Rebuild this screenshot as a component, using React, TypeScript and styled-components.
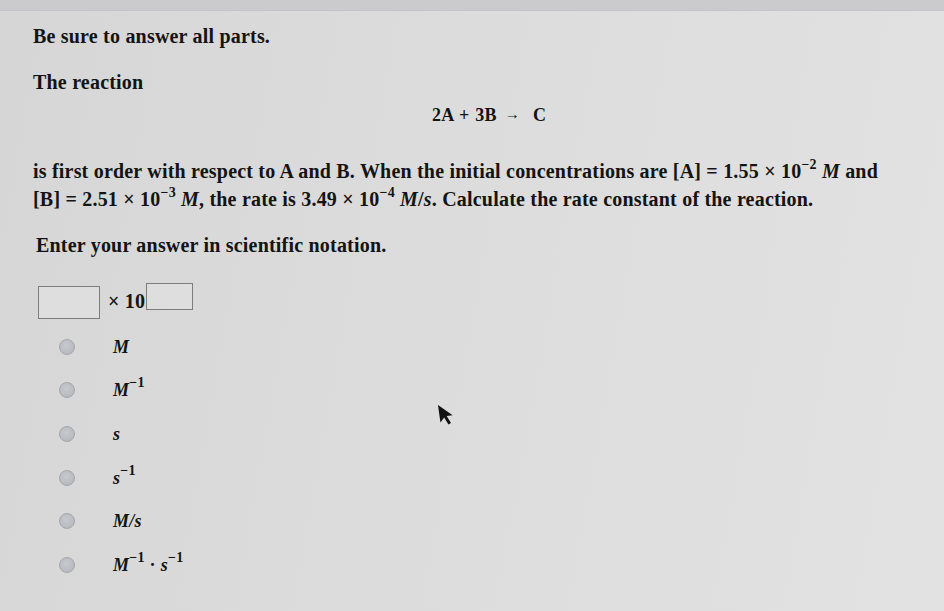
import { FC } from 'react';
import styled, { createGlobalStyle } from 'styled-components';

const GlobalStyle = createGlobalStyle`
  html, body {
    margin: 0;
    padding: 0;
    height: 100%;
  }
  body {
    background: #dcdcdc;
    font-family: 'Liberation Serif', 'Times New Roman', serif;
    color: #141414;
  }
`;

const units = [
  { id: 1, base: 'M', exp: '' },
  { id: 2, base: 'M', exp: '−1' },
  { id: 3, base: 's', exp: '' },
  { id: 4, base: 's', exp: '−1' },
  { id: 5, base: 'M/s', exp: '' },
  { id: 6, base: 'M', exp: '−1', second: 's' },
];

const Root = styled.div`
  position: relative;
  width: 944px;
  height: 611px;
  overflow: hidden;
  background: linear-gradient(100deg, #d6d6d6 0%, #dcdcdc 45%, #e2e2e2 100%);
`;

const TopBand = styled.div`
  height: 10px;
  background: #cbcbcd;
  border-bottom: 1px solid #c4c4c6;
`;

const Content = styled.div`
  padding-left: 33px;
  font-weight: bold;
  font-size: 20px;
  letter-spacing: 0.2px;
`;

const Line = styled.div<{ $top: number; $indent?: number }>`
  margin-top: ${(p) => p.$top}px;
  padding-left: ${(p) => p.$indent || 0}px;
  line-height: 22px;
  white-space: nowrap;
`;

const Equation = styled.div`
  margin-top: 12px;
  padding-left: 399px;
  font-size: 18px;
  line-height: 20px;
  word-spacing: 1px;
`;

const Arrow = styled.span`
  display: inline-block;
  font-size: 15px;
  margin: 0 13px 0 8px;
  transform: translateY(-2px);
`;

const Paragraph = styled.p`
  margin: 31px 0 0;
  line-height: 28px;
  white-space: nowrap;
`;

const Sup = styled.sup`
  font-size: 14px;
  font-style: normal;
  line-height: 0;
  vertical-align: 9px;
`;

const Em = styled.i`
  font-style: italic;
`;

const AnswerRow = styled.div`
  display: flex;
  align-items: flex-start;
  margin-top: 27px;
  margin-left: 5px;
  height: 36px;
`;

const Box = styled.div<{ $w: number; $h: number; $top: number }>`
  width: ${(p) => p.$w}px;
  height: ${(p) => p.$h}px;
  margin-top: ${(p) => p.$top}px;
  border: 1px solid #7d7d7d;
  background: #dedede;
  box-sizing: border-box;
`;

const Times = styled.span`
  margin: 7px 1px 0 8px;
  font-size: 20px;
  line-height: 22px;
`;

const UnitList = styled.div`
  margin-top: 6px;
`;

const UnitRow = styled.div`
  display: flex;
  align-items: center;
  height: 43.6px;
`;

const Radio = styled.span`
  width: 16px;
  height: 16px;
  margin-left: 26px;
  border-radius: 50%;
  background: radial-gradient(circle at 45% 40%, #c8c9ce, #b3b4ba);
  border: 1px solid #a5a6ad;
  box-sizing: border-box;
`;

const UnitLabel = styled.span`
  margin-left: 38px;
  font-size: 18px;
  font-style: italic;
  line-height: 20px;
`;

const Dot = styled.span`
  font-style: normal;
  margin: 0 5px;
`;

const Cursor = styled.svg`
  position: absolute;
  left: 437px;
  top: 403px;
`;

const Unit: FC<{ base: string; exp: string; second?: string }> = ({ base, exp, second }) => (
  <UnitLabel>
    {base}
    {exp && <Sup>{exp}</Sup>}
    {second && (
      <>
        <Dot>·</Dot>
        {second}
        <Sup>−1</Sup>
      </>
    )}
  </UnitLabel>
);

const App: FC = () => (
  <Root>
    <GlobalStyle />
    <TopBand />
    <Content>
      <Line $top={14}>Be sure to answer all parts.</Line>
      <Line $top={24}>The reaction</Line>
      <Equation>
        2A + 3B<Arrow>→</Arrow>C
      </Equation>
      <Paragraph>
        is first order with respect to A and B. When the initial concentrations are [A] = 1.55 × 10
        <Sup>−2</Sup> <Em>M</Em> and
        <br />
        [B] = 2.51 × 10<Sup>−3</Sup> <Em>M</Em>, the rate is 3.49 × 10<Sup>−4</Sup> <Em>M</Em>/<Em>s</Em>.
        Calculate the rate constant of the reaction.
      </Paragraph>
      <Line $top={21} $indent={3}>
        Enter your answer in scientific notation.
      </Line>
      <AnswerRow>
        <Box $w={62} $h={33} $top={3} />
        <Times>× 10</Times>
        <Box $w={47} $h={27} $top={0} />
      </AnswerRow>
      <UnitList>
        {units.map((u) => (
          <UnitRow key={u.id}>
            <Radio />
            <Unit base={u.base} exp={u.exp} second={u.second} />
          </UnitRow>
        ))}
      </UnitList>
    </Content>
    <Cursor width="18" height="24" viewBox="0 0 16 22">
      <path d="M2 1 L2 17 L6 13 L9 20 L11.5 19 L8.5 12 L14 12 Z" fill="#111" transform="rotate(-8 8 11)" />
    </Cursor>
  </Root>
);

export default App;
